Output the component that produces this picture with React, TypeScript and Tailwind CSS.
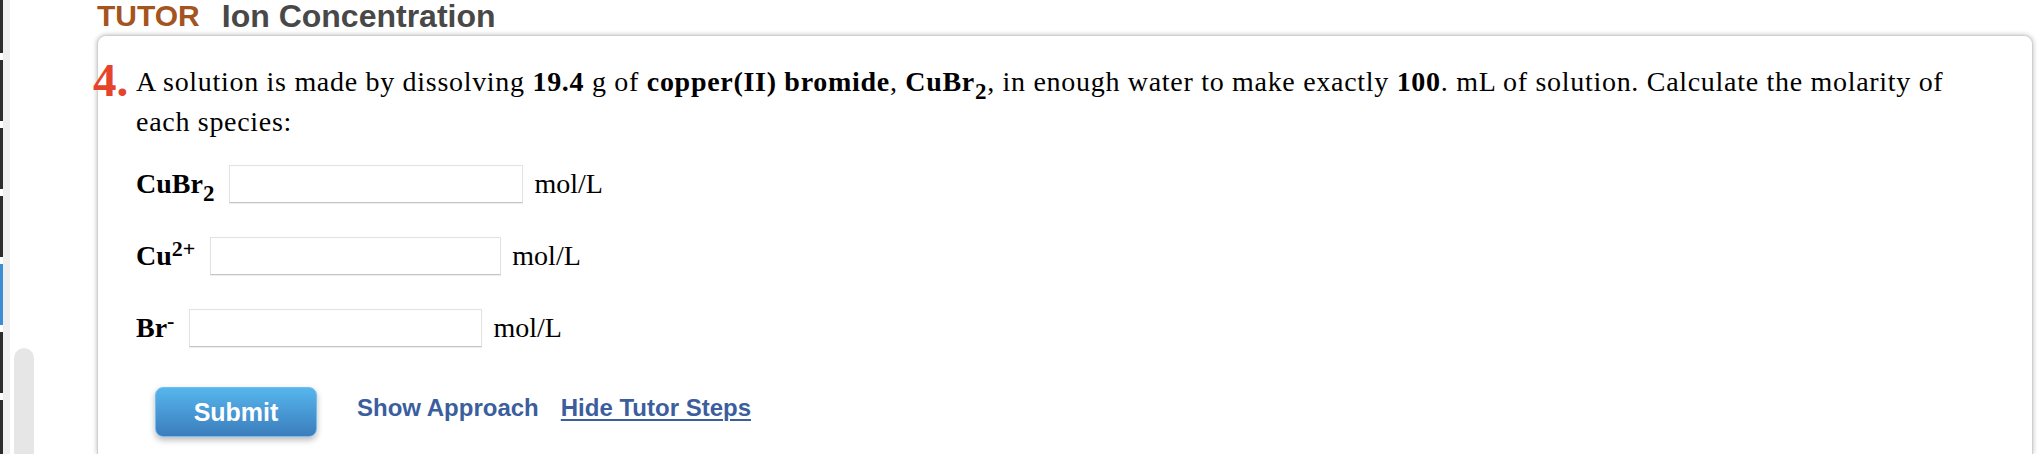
import React from 'react'

const serif = { fontFamily: '"Liberation Serif", "Times New Roman", serif' }
const sans = { fontFamily: '"Liberation Sans", Arial, Helvetica, sans-serif' }

function SideStrip() {
  const segs = ['dark', 'dark', 'dark', 'dark', 'blue', 'dark', 'dark']
  return (
    <div className="flex h-full shrink-0">
      <div className="flex w-[3px] flex-col gap-[7px] overflow-hidden">
        {segs.map((s, i) => (
          <div
            key={i}
            className={`w-full shrink-0 ${i === 0 ? 'h-[53px]' : 'h-[61px]'} ${s === 'blue' ? 'bg-[#3c8dd4]' : 'bg-[#2c2c2c]'}`}
          />
        ))}
      </div>
      <div className="w-[7px] bg-[#efefef]" />
      <div className="flex w-[87px] flex-col pt-[348px] pl-[4px]">
        <div className="w-[20px] flex-1 rounded-t-full bg-[#e6e6e6]" />
      </div>
    </div>
  )
}

function AnswerRow({ label, width, className }: { label: React.ReactNode; width: string; className: string }) {
  return (
    <div className={`flex h-[40px] items-center ${className}`}>
      <span className="font-bold leading-[40px]">{label}</span>
      <input
        type="text"
        className={`ml-[15px] h-[38px] ${width} border border-[#e2e2e2] border-b-[#c4c4c4] bg-white shadow-[0_1px_1px_rgba(0,0,0,0.06)] outline-none`}
      />
      <span className="ml-[11px] leading-[40px]">mol/L</span>
    </div>
  )
}

export default function App() {
  return (
    <div className="flex h-[454px] w-[2040px] overflow-hidden bg-white">
      <SideStrip />

      <div className="flex min-w-0 flex-1 flex-col pr-[7px]">
        <h1 className="flex h-[35px] items-start font-bold leading-[32px]" style={sans}>
          <span className="text-[30px] text-[#a3541f]">TUTOR</span>
          <span className="ml-[22px] text-[32px] text-[#484848]">Ion Concentration</span>
        </h1>

        <div
          className="relative flex-1 rounded-t-[9px] border border-b-0 border-[#d0d0d0] bg-white pt-[26px] pr-[40px] pl-[38px] text-[28px] text-black shadow-[0_0_5px_rgba(0,0,0,0.28)]"
          style={serif}
        >
          <span className="absolute top-[21px] left-[-5px] text-[47px] leading-[47px] font-bold text-[#e5432b]">4.</span>

          <p className="leading-[40px] tracking-[0.7px]">
            A solution is made by dissolving <b>19.4</b> g of <b>copper(II) bromide</b>,{' '}
            <b>
              CuBr<sub className="-bottom-2 text-[23px]">2</sub>
            </b>
            , in enough water to make exactly <b>100</b>. mL of solution. Calculate the molarity of each species:
          </p>

          <AnswerRow
            className="mt-[22px]"
            width="w-[294px]"
            label={
              <>
                CuBr<sub className="-bottom-2 text-[23px]">2</sub>
              </>
            }
          />
          <AnswerRow
            className="mt-[32px]"
            width="w-[291px]"
            label={
              <>
                Cu<sup className="-top-[9px] text-[22px]">2+</sup>
              </>
            }
          />
          <AnswerRow
            className="mt-[32px]"
            width="w-[293px]"
            label={
              <>
                Br<sup className="-top-[9px] text-[22px]">-</sup>
              </>
            }
          />

          <div className="mt-[39px] ml-[19px] flex items-start" style={sans}>
            <button className="h-[50px] w-[162px] rounded-[8px] border border-[#74bdec] bg-gradient-to-b from-[#56b6ee] to-[#3b7dbd] text-[25px] leading-[25px] font-bold text-white shadow-[0_3px_6px_rgba(0,0,0,0.28)]">
              Submit
            </button>
            <div className="mt-[9px] ml-[40px] flex text-[24px] leading-[24px] font-bold text-[#3b5e9e]">
              <span>Show Approach</span>
              <span className="ml-[22px] underline decoration-2 underline-offset-[3px]">Hide Tutor Steps</span>
            </div>
          </div>
        </div>
      </div>
    </div>
  )
}
